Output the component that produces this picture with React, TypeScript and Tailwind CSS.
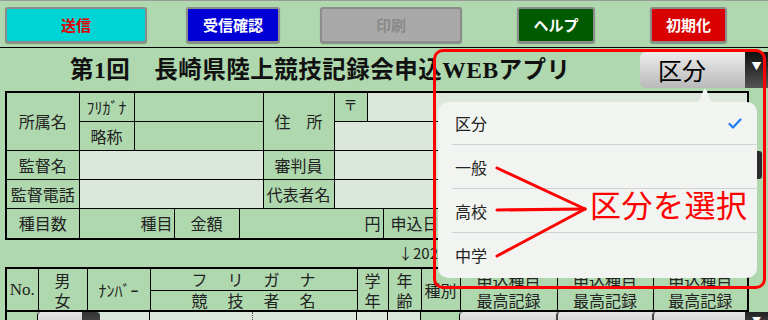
import React from 'react'

const td = 'border border-black p-0 text-center align-middle'
const lbl = `${td} bg-[#afd8ae]`
const val = `${td} bg-[#dbe7da]`

function Btn({ className, children }: { className: string; children: React.ReactNode }) {
  return (
    <div className={`h-[36px] flex items-center justify-center rounded-[3px] border-2 border-[#8c8c8c] text-[15px] font-bold shadow-[0_1px_1px_rgba(0,0,0,0.3)] ${className}`}>
      {children}
    </div>
  )
}

function Select({ label }: { label: string }) {
  return (
    <div className="mt-[4px] h-[36px] w-[128px] flex self-start">
      <div className="flex-1 rounded-l-[6px] bg-gradient-to-b from-[#ededed] to-[#b9b9b9] flex items-center pl-[18px] text-[24px] text-black">
        {label}
      </div>
      <div className="w-[23px] bg-gradient-to-b from-[#111] to-[#555] flex items-start justify-center pt-[6px] text-[10px] text-white">▼</div>
    </div>
  )
}

export default function App() {
  return (
    <div className="relative w-[768px] h-[320px] overflow-hidden bg-[#afd8ae] border-t border-[#9a9a9a] font-['Noto_Sans_CJK_JP',sans-serif] text-[#222]">
      {/* top buttons */}
      <div className="flex items-start h-[47px] pt-[6px] pl-[5px] border-b border-black">
        <Btn className="w-[142px] bg-[#00d5d5] text-[#e00000]">送信</Btn>
        <Btn className="ml-[39px] w-[94px] bg-[#0000d6] text-white">受信確認</Btn>
        <Btn className="ml-[40px] w-[142px] bg-[#a9a9a9] text-[#8a8a8a]">印刷</Btn>
        <Btn className="ml-[55px] w-[78px] bg-[#005a00] text-white">ヘルプ</Btn>
        <Btn className="ml-[55px] w-[77px] bg-[#d80000] text-white">初期化</Btn>
      </div>

      {/* title */}
      <div className="flex h-[43px]">
        <div className="ml-[70px] pt-[3px] self-center text-[23.5px] font-bold text-[#111] font-['Liberation_Serif','Noto_Sans_CJK_JP',serif] tracking-[0.5px]">
          第1回　長崎県陸上競技記録会申込WEBアプリ
        </div>
        <div className="ml-auto">
          <Select label="区分" />
        </div>
      </div>

      {/* entry form */}
      <table className="ml-[5px] w-[742px] table-fixed border-collapse border-2 border-black text-[16px] leading-none">
        <colgroup>
          <col className="w-[73px]" />
          <col className="w-[55px]" />
          <col className="w-[40px]" />
          <col className="w-[65px]" />
          <col className="w-[24px]" />
          <col className="w-[71px]" />
          <col className="w-[33px]" />
          <col className="w-[16px]" />
          <col className="w-[58px]" />
          <col className="w-[307px]" />
        </colgroup>
        <tbody>
          <tr className="h-[29px]">
            <td rowSpan={2} className={lbl}>所属名</td>
            <td className={`${lbl} text-[16px]`}>ﾌﾘｶﾞﾅ</td>
            <td colSpan={3} className={lbl}></td>
            <td rowSpan={2} className={lbl}>住　所</td>
            <td className={`${lbl} align-top pt-[4px] text-[14px]`}>〒</td>
            <td colSpan={3} className={val}></td>
          </tr>
          <tr className="h-[29px]">
            <td className={lbl}>略称</td>
            <td colSpan={3} className={lbl}></td>
            <td colSpan={4} className={val}></td>
          </tr>
          <tr className="h-[29px]">
            <td className={lbl}>監督名</td>
            <td colSpan={4} className={val}></td>
            <td className={lbl}>審判員</td>
            <td colSpan={4} className={val}></td>
          </tr>
          <tr className="h-[29px]">
            <td className={lbl}>監督電話</td>
            <td colSpan={4} className={val}></td>
            <td className={lbl}>代表者名</td>
            <td colSpan={4} className={val}></td>
          </tr>
          <tr className="h-[31px]">
            <td className={lbl}>種目数</td>
            <td colSpan={2} className={`${lbl} text-right pr-[1px]`}>種目</td>
            <td className={lbl}>金額</td>
            <td colSpan={4} className={`${lbl} text-right pr-[2px]`}>円</td>
            <td className={`${lbl} text-left pl-[7px]`}>申込日</td>
            <td className={lbl}></td>
          </tr>
        </tbody>
      </table>

      <div className="h-[27px] flex items-center pl-[398px] text-[15px]">↓2020年度</div>

      {/* athletes table */}
      <table className="ml-[5px] w-[742px] table-fixed border-collapse border-2 border-black text-[16px] leading-none">
        <colgroup>
          <col className="w-[32px]" />
          <col className="w-[49px]" />
          <col className="w-[63px]" />
          <col className="w-[207px]" />
          <col className="w-[31px]" />
          <col className="w-[33px]" />
          <col className="w-[39px]" />
          <col className="w-[97px]" />
          <col className="w-[96px]" />
          <col className="w-[95px]" />
        </colgroup>
        <tbody>
          <tr className="h-[22px]">
            <td rowSpan={2} className={`${lbl} text-[17px] font-['Liberation_Serif',serif]`}>No.</td>
            <td rowSpan={2} className={`${lbl} leading-[20px]`}>男<br />女</td>
            <td rowSpan={2} className={`${lbl} text-[16px]`}>ﾅﾝﾊﾞｰ</td>
            <td className={`${lbl} tracking-[20px] pl-[20px]`}>フリガナ</td>
            <td rowSpan={2} className={`${lbl} leading-[20px]`}>学<br />年</td>
            <td rowSpan={2} className={`${lbl} leading-[20px]`}>年<br />齢</td>
            <td rowSpan={2} className={lbl}>種別</td>
            <td className={`${lbl} border-b-0`}>申込種目</td>
            <td className={`${lbl} border-b-0`}>申込種目</td>
            <td className={`${lbl} border-b-0`}>申込種目</td>
          </tr>
          <tr className="h-[21px]">
            <td className={`${lbl} tracking-[20px] pl-[20px]`}>競技者名</td>
            <td className={`${lbl} border-t-0`}>最高記録</td>
            <td className={`${lbl} border-t-0`}>最高記録</td>
            <td className={`${lbl} border-t-0`}>最高記録</td>
          </tr>
        </tbody>
      </table>

      {/* first athlete row */}
      <div className="flex h-[20px] ml-[5px]">
        <div className="w-[32px] border-l-2 border-black bg-[#afd8ae]" />
        <div className="w-[45px] border-l border-black bg-gradient-to-b from-[#e6e6e6] to-[#c4c4c4] rounded-tl-[4px]" />
        <div className="w-[18px] bg-gradient-to-b from-[#333] to-[#555] rounded-tr-[4px]" />
        <div className="w-[49px] bg-[#dbe7da]" />
        <div className="w-[207px] border-l border-black bg-[#dbe7da] flex">
          <div className="ml-[102px] border-l border-dotted border-[#555]" />
        </div>
        <div className="w-[31px] border-l border-black bg-[#dbe7da]" />
        <div className="w-[33px] border-l border-black bg-[#dbe7da]" />
        <div className="w-[39px] border-l border-black bg-[#afd8ae]" />
        <div className="w-[97px] border-l border-black bg-gradient-to-b from-[#e6e6e6] to-[#c4c4c4] rounded-tl-[4px]" />
        <div className="w-[96px] border-l-2 border-[#444] bg-gradient-to-b from-[#e6e6e6] to-[#c4c4c4] rounded-tl-[4px]" />
        <div className="w-[93px] border-l-2 border-[#444] bg-gradient-to-b from-[#e6e6e6] to-[#c4c4c4] rounded-tl-[4px]" />
        <div className="w-[23px] bg-gradient-to-b from-[#222] to-[#555] flex justify-center pt-[2px] text-[9px] text-white">▼</div>
      </div>

      {/* dark select edge behind popover */}
      <div className="absolute left-[750px] top-[150px] w-[12px] h-[28px] bg-[#2a2a2a] rounded-[3px]" />

      {/* popover */}
      <svg className="absolute left-[690px] top-[87px]" width="30" height="16" viewBox="0 0 30 16">
        <path d="M0 16 C8 16 10 14 13 3 Q15 -1 17 3 C20 14 22 16 30 16 Z" fill="#f1f4f1" />
      </svg>
      <div className="absolute left-[438px] top-[101px] w-[319px] h-[176px] bg-[#f1f4f1] rounded-[10px] flex flex-col text-[16px] text-[#222]">
        <div className="h-[43px] ml-[14px] pl-[3px] pr-[15px] border-b border-[#cfd3d6] flex items-center justify-between">
          <span>区分</span>
          <svg width="14" height="11" viewBox="0 0 14 11">
            <path d="M1.5 6 L5 9.5 L12.5 1.5" fill="none" stroke="#1e7cf2" strokeWidth="2.2" strokeLinecap="round" strokeLinejoin="round" />
          </svg>
        </div>
        <div className="h-[44px] ml-[14px] pl-[3px] border-b border-[#cfd3d6] flex items-center">一般</div>
        <div className="h-[44px] ml-[14px] pl-[3px] border-b border-[#cfd3d6] flex items-center">高校</div>
        <div className="h-[44px] ml-[14px] pl-[3px] flex items-center">中学</div>
      </div>

      {/* red annotation */}
      <div className="absolute left-[433px] top-[48px] w-[333px] h-[240px] border-[3px] border-[#ff0000] rounded-[10px]" />
      <svg className="absolute left-0 top-0 pointer-events-none" width="768" height="320" viewBox="0 0 768 320">
        <g stroke="#ff0000" strokeWidth="3" strokeLinecap="round" fill="none">
          <line x1="497" y1="167" x2="585" y2="208" />
          <line x1="497" y1="209" x2="585" y2="208" />
          <line x1="497" y1="255" x2="585" y2="208" />
        </g>
      </svg>
      <div className="absolute left-[590px] top-[187px] text-[31px] leading-none text-[#ff0000] tracking-[0.5px]">区分を選択</div>
    </div>
  )
}
